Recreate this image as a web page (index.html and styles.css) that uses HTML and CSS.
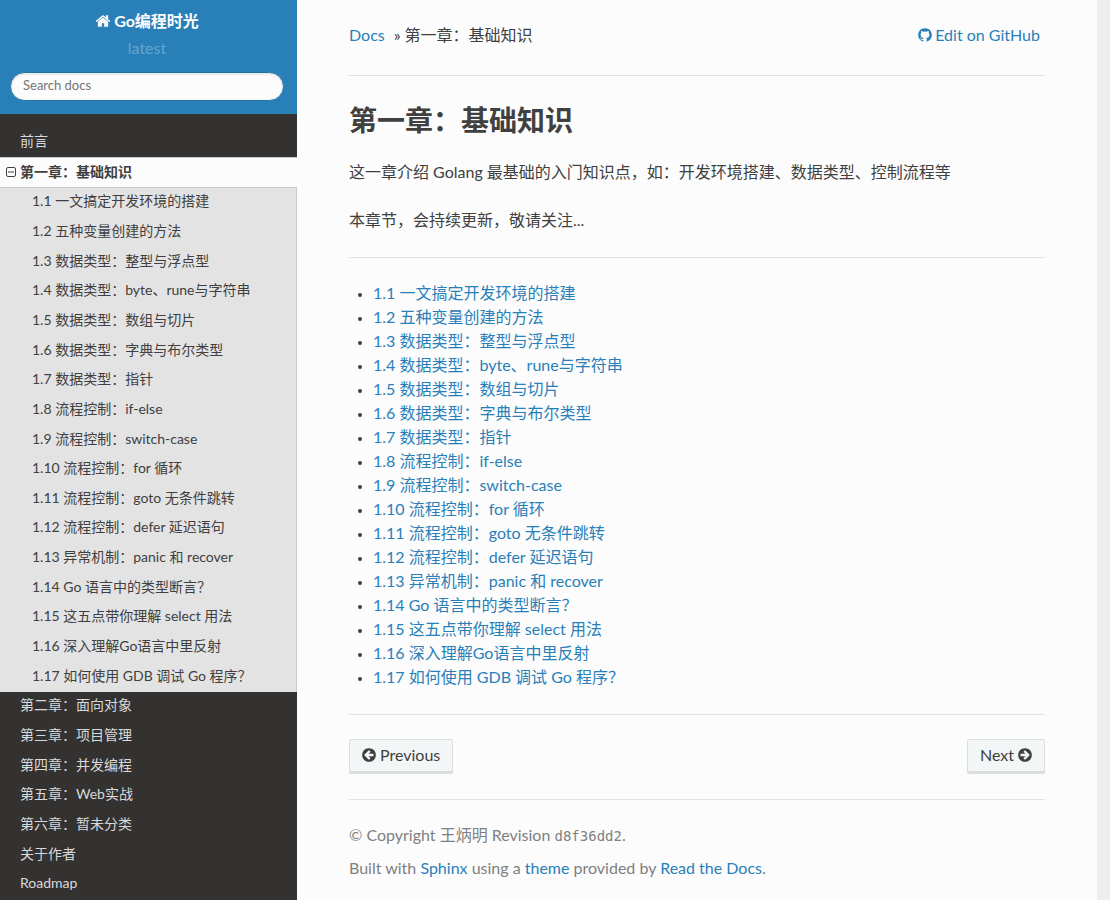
FILE: index.html
```html
<!DOCTYPE html>
<html lang="zh-CN">
<head>
<meta charset="utf-8">
<meta name="viewport" content="width=device-width, initial-scale=1">
<title>第一章：基础知识 — Go编程时光</title>
<link rel="stylesheet" href="styles.css">
</head>
<body>
<div class="layout">
  <aside class="sidebar">
    <div class="search">
      <a class="home" href="#"><svg class="icon" viewBox="0 0 1792 1792" aria-hidden="true"><path d="M1472 992v480q0 26-19 45t-45 19h-384v-384h-256v384h-384q-26 0-45-19t-19-45v-480q0-1 .5-3t.5-3l575-474 575 474q1 2 1 6zm223-69l-62 74q-8 9-21 11h-3q-13 0-21-7l-692-577-692 577q-12 8-24 7-13-2-21-11l-62-74q-8-10-7-23.5t11-21.5l719-599q32-26 76-26t76 26l244 204v-195q0-14 9-23t23-9h192q14 0 23 9t9 23v408l219 182q10 8 11 21.5t-7 23.5z"/></svg><span>Go编程时光</span></a>
      <div class="version">latest</div>
      <form role="search">
        <input class="search-input" type="text" placeholder="Search docs" aria-label="Search docs">
      </form>
    </div>
    <nav aria-label="目录">
      <ul class="menu">
        <li><a href="#">前言</a></li>
        <li class="current">
          <div class="current-row">
            <button class="toggle" type="button" aria-label="折叠"><svg class="toggle-icon" viewBox="0 0 10 10" aria-hidden="true"><rect x="0.5" y="0.5" width="9" height="9" rx="1.5"/><path d="M2 5h6"/></svg></button>
            <a href="#">第一章：基础知识</a>
          </div>
          <ul class="submenu">
            <li><a href="#">1.1 一文搞定开发环境的搭建</a></li>
            <li><a href="#">1.2 五种变量创建的方法</a></li>
            <li><a href="#">1.3 数据类型：整型与浮点型</a></li>
            <li><a href="#">1.4 数据类型：byte、rune与字符串</a></li>
            <li><a href="#">1.5 数据类型：数组与切片</a></li>
            <li><a href="#">1.6 数据类型：字典与布尔类型</a></li>
            <li><a href="#">1.7 数据类型：指针</a></li>
            <li><a href="#">1.8 流程控制：if-else</a></li>
            <li><a href="#">1.9 流程控制：switch-case</a></li>
            <li><a href="#">1.10 流程控制：for 循环</a></li>
            <li><a href="#">1.11 流程控制：goto 无条件跳转</a></li>
            <li><a href="#">1.12 流程控制：defer 延迟语句</a></li>
            <li><a href="#">1.13 异常机制：panic 和 recover</a></li>
            <li><a href="#">1.14 Go 语言中的类型断言？</a></li>
            <li><a href="#">1.15 这五点带你理解 select 用法</a></li>
            <li><a href="#">1.16 深入理解Go语言中里反射</a></li>
            <li><a href="#">1.17 如何使用 GDB 调试 Go 程序？</a></li>
          </ul>
        </li>
        <li><a href="#">第二章：面向对象</a></li>
        <li><a href="#">第三章：项目管理</a></li>
        <li><a href="#">第四章：并发编程</a></li>
        <li><a href="#">第五章：Web实战</a></li>
        <li><a href="#">第六章：暂未分类</a></li>
        <li><a href="#">关于作者</a></li>
        <li><a href="#">Roadmap</a></li>
      </ul>
    </nav>
  </aside>
  <main class="content">
    <div class="topbar">
      <nav class="breadcrumbs" aria-label="Breadcrumbs"><a href="#">Docs</a><span class="separator">»</span><span>第一章：基础知识</span></nav>
      <a class="github" href="#"><svg class="icon" viewBox="0 0 1792 1792" aria-hidden="true"><path d="M896 128q209 0 385.5 103t279.5 279.5 103 385.5q0 251-146.5 451.5t-378.5 277.5q-27 5-40-7t-13-30q0-3 .5-76.5t.5-134.5q0-97-52-142 57-6 102.5-18t94-39 81-66.5 53-105 20.5-150.5q0-119-79-206 37-91-8-204-28-9-81 11t-92 44l-38 24q-93-26-192-26t-192 26q-16-11-42.5-27t-83.5-38.5-85-13.5q-45 113-8 204-79 87-79 206 0 85 20.5 150t52.5 105 80.5 67 94 39 102.5 18q-39 36-49 103-21 10-45 15t-57 5-65.5-21.5-55.5-62.5q-19-32-48.5-52t-49.5-24l-20-3q-21 0-29 4.5t-5 11.5 9 14 13 12l7 5q22 10 43.5 38t31.5 51l10 23q13 38 44 61.5t67 30 69.5 7 55.5-3.5l23-4q0 38 .5 88.5t.5 54.5q0 18-13 30t-40 7q-232-77-378.5-277.5t-146.5-451.5q0-209 103-385.5t279.5-279.5 385.5-103z"/></svg><span>Edit on GitHub</span></a>
    </div>
    <hr>
    <article>
      <h1>第一章：基础知识</h1>
      <p>这一章介绍 Golang 最基础的入门知识点，如：开发环境搭建、数据类型、控制流程等</p>
      <p>本章节，会持续更新，敬请关注...</p>
      <hr>
      <ul class="toc">
        <li><a href="#">1.1 一文搞定开发环境的搭建</a></li>
        <li><a href="#">1.2 五种变量创建的方法</a></li>
        <li><a href="#">1.3 数据类型：整型与浮点型</a></li>
        <li><a href="#">1.4 数据类型：byte、rune与字符串</a></li>
        <li><a href="#">1.5 数据类型：数组与切片</a></li>
        <li><a href="#">1.6 数据类型：字典与布尔类型</a></li>
        <li><a href="#">1.7 数据类型：指针</a></li>
        <li><a href="#">1.8 流程控制：if-else</a></li>
        <li><a href="#">1.9 流程控制：switch-case</a></li>
        <li><a href="#">1.10 流程控制：for 循环</a></li>
        <li><a href="#">1.11 流程控制：goto 无条件跳转</a></li>
        <li><a href="#">1.12 流程控制：defer 延迟语句</a></li>
        <li><a href="#">1.13 异常机制：panic 和 recover</a></li>
        <li><a href="#">1.14 Go 语言中的类型断言？</a></li>
        <li><a href="#">1.15 这五点带你理解 select 用法</a></li>
        <li><a href="#">1.16 深入理解Go语言中里反射</a></li>
        <li><a href="#">1.17 如何使用 GDB 调试 Go 程序？</a></li>
      </ul>
    </article>
    <hr>
    <footer>
      <div class="pager">
        <a class="btn" href="#"><svg class="icon" viewBox="0 0 1792 1792" aria-hidden="true"><path d="M1408 960v-128q0-26-19-45t-45-19h-502l189-189q19-19 19-45t-19-45l-91-91q-18-18-45-18t-45 18l-362 362-91 91q-18 18-18 45t18 45l91 91 362 362q18 18 45 18t45-18l91-91q18-18 18-45t-18-45l-189-189h502q26 0 45-19t19-45zm256-64q0 209-103 385.5t-279.5 279.5-385.5 103-385.5-103-279.5-279.5-103-385.5 103-385.5 279.5-279.5 385.5-103 385.5 103 279.5 279.5 103 385.5z"/></svg><span>Previous</span></a>
        <a class="btn btn-next" href="#"><span>Next</span><svg class="icon" viewBox="0 0 1792 1792" aria-hidden="true"><path transform="translate(1792 0) scale(-1 1)" d="M1408 960v-128q0-26-19-45t-45-19h-502l189-189q19-19 19-45t-19-45l-91-91q-18-18-45-18t-45 18l-362 362-91 91q-18 18-18 45t18 45l91 91 362 362q18 18 45 18t45-18l91-91q18-18 18-45t-18-45l-189-189h502q26 0 45-19t19-45zm256-64q0 209-103 385.5t-279.5 279.5-385.5 103-385.5-103-279.5-279.5-103-385.5 103-385.5 279.5-279.5 385.5-103 385.5 103 279.5 279.5 103 385.5z"/></svg></a>
      </div>
      <hr>
      <div class="credits">
        <div>© Copyright 王炳明 Revision <code>d8f36dd2</code>.</div>
        <div>Built with <a href="#">Sphinx</a> using a <a href="#">theme</a> provided by <a href="#">Read the Docs</a>.</div>
      </div>
    </footer>
  </main>
</div>
</body>
</html>
```
FILE: styles.css
```css
* {
  box-sizing: border-box;
}

body {
  margin: 0;
  background: #eeeeee;
  color: #404040;
  font: 16px/24px Lato, "Noto Sans CJK SC", sans-serif;
}

a {
  color: #2980b9;
  text-decoration: none;
}

ul {
  margin: 0;
  padding: 0;
  list-style: none;
}

hr {
  margin: 25px 0 23px;
  border: 0;
  border-top: 1px solid #e1e4e5;
}

.icon {
  width: 16px;
  height: 16px;
  flex: none;
  fill: currentColor;
}

.layout {
  display: flex;
  align-items: flex-start;
}

/* Sidebar */

.sidebar {
  position: sticky;
  top: 0;
  display: flex;
  flex-direction: column;
  flex: none;
  width: 297px;
  height: 100vh;
  overflow-y: auto;
  scrollbar-width: none;
  background: #343131;
}

.sidebar nav {
  display: flex;
  flex: 1 0 auto;
  padding: 13px 0 1px;
}

.search {
  display: flex;
  flex-direction: column;
  align-items: center;
  padding: 9px 13px 13px 10px;
  background: #2980b9;
}

.home {
  display: flex;
  align-items: center;
  gap: 3px;
  color: #fcfcfc;
  font-weight: 700;
}

.version {
  margin: 3px 0 12px;
  color: rgba(255, 255, 255, 0.3);
}

.search form {
  align-self: stretch;
}

.search-input {
  display: block;
  width: 100%;
  height: 29px;
  padding: 0 12px 3px;
  border: 1px solid #2472a4;
  border-radius: 15px;
  background: #fcfcfc;
  box-shadow: inset 0 1px 3px #dddddd;
  color: #404040;
  font: 13px/20px Lato, "Noto Sans CJK SC", sans-serif;
}

.search-input::placeholder {
  color: #757575;
}

.menu {
  display: grid;
  flex: 1;
  grid-template-rows: minmax(28px, 1fr) 31px;
  grid-auto-rows: minmax(28px, 1fr);
  font-size: 14px;
  line-height: 18px;
}

.menu a {
  display: flex;
  align-items: center;
  height: 100%;
  padding: 0 20px 2px;
  color: #d9d9d9;
}

.menu .current {
  display: grid;
  grid-row: span 18;
  grid-template-rows: subgrid;
}

.current-row {
  display: flex;
  align-items: center;
  border: solid #c9c9c9;
  border-width: 1px 0;
  background: #fcfcfc;
}

.menu .current-row a {
  padding: 0 0 0 4px;
  color: #404040;
  font-weight: 700;
}

.toggle {
  display: flex;
  padding: 0 0 0 6px;
  border: 0;
  background: none;
  color: #404040;
}

.toggle-icon {
  width: 10px;
  height: 10px;
  fill: none;
  stroke: currentColor;
}

.submenu {
  display: grid;
  grid-row: span 17;
  grid-template-rows: subgrid;
  border-right: 1px solid #c9c9c9;
  background: #e3e3e3;
}

.menu .submenu a {
  padding-left: 32px;
  color: #404040;
}

/* Content */

.content {
  flex: 1;
  min-width: 0;
  max-width: 800px;
  min-height: 100vh;
  padding: 23px 52px 20px;
  background: #fcfcfc;
}

.topbar {
  display: flex;
  justify-content: space-between;
  margin-bottom: 28px;
}

.separator {
  margin: 0 4px 0 9px;
}

.github {
  display: flex;
  align-items: center;
  gap: 2px;
  padding-right: 5px;
}

h1 {
  margin: 0 0 18px;
  font-size: 28px;
  line-height: 43px;
}

p {
  margin: 0 0 24px;
}

.toc {
  padding-left: 24px;
  list-style: disc;
}

.toc li::marker {
  font-size: 12px;
}

.pager {
  display: flex;
  justify-content: space-between;
  margin-top: 24px;
}

.btn {
  display: flex;
  align-items: center;
  gap: 3px;
  padding: 3px 12px 7px 11px;
  border: 1px solid rgba(0, 0, 0, 0.1);
  border-bottom-width: 0;
  border-radius: 2px;
  background: #f3f6f6;
  box-shadow: inset 0 -3px 0 #d9dddd;
  color: #404040;
}

.btn-next {
  padding-right: 11px;
  padding-left: 12px;
}

.credits {
  display: grid;
  gap: 9px;
  color: #808080;
}

code {
  font: 14px/20px "DejaVu Sans Mono", monospace;
}
```
